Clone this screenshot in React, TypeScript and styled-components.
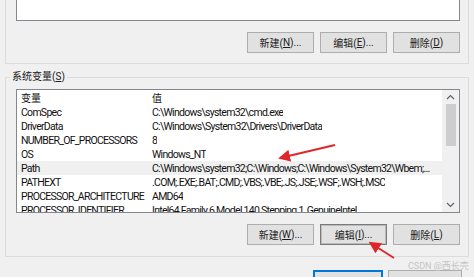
import styled, { createGlobalStyle } from "styled-components";

const GlobalStyle = createGlobalStyle`
  html, body {
    margin: 0;
    padding: 0;
    background: #f0f0f0;
    overflow: hidden;
  }
  body {
    font-family: Roboto, "Noto Sans CJK SC", sans-serif;
    font-size: 10.5px;
    color: #000;
  }
`;

type Row = { name: string; value: string; selected?: boolean };

const rows: Row[] = [
  { name: "ComSpec", value: "C:\\Windows\\system32\\cmd.exe" },
  { name: "DriverData", value: "C:\\Windows\\System32\\Drivers\\DriverData" },
  { name: "NUMBER_OF_PROCESSORS", value: "8" },
  { name: "OS", value: "Windows_NT" },
  {
    name: "Path",
    value: "C:\\Windows\\system32;C:\\Windows;C:\\Windows\\System32\\Wbem;...",
    selected: true,
  },
  { name: "PATHEXT", value: ".COM;.EXE;.BAT;.CMD;.VBS;.VBE;.JS;.JSE;.WSF;.WSH;.MSC" },
  { name: "PROCESSOR_ARCHITECTURE", value: "AMD64" },
  { name: "PROCESSOR_IDENTIFIER", value: "Intel64 Family 6 Model 140 Stepping 1, GenuineIntel" },
];

const App = () => {
  return (
    <Window>
      <GlobalStyle />
      <UserGroup>
        <ListStub />
        <ButtonRow>
          <Button>
            新建(<u>N</u>)...
          </Button>
          <Button>
            编辑(<u>E</u>)...
          </Button>
          <Button>
            删除(<u>D</u>)
          </Button>
        </ButtonRow>
      </UserGroup>

      <Group>
        <Legend>
          系统变量(<u>S</u>)
        </Legend>
        <List>
          <Rows>
            <HeaderRow>
              <NameCell>变量</NameCell>
              <ValueCell>值</ValueCell>
            </HeaderRow>
            {rows.map((r) => (
              <ItemRow key={r.name} $selected={r.selected}>
                <NameCell>{r.name}</NameCell>
                <ValueCell>{r.value}</ValueCell>
              </ItemRow>
            ))}
          </Rows>
          <ScrollBar>
            <ArrowBox>
              <svg width="9" height="6" viewBox="0 0 9 6">
                <path d="M1 5 L4.5 1.5 L8 5" fill="none" stroke="#606060" strokeWidth="1.2" />
              </svg>
            </ArrowBox>
            <Thumb />
            <Track />
            <ArrowBox>
              <svg width="9" height="6" viewBox="0 0 9 6">
                <path d="M1 1 L4.5 4.5 L8 1" fill="none" stroke="#606060" strokeWidth="1.2" />
              </svg>
            </ArrowBox>
          </ScrollBar>
        </List>
        <ButtonRow>
          <Button>
            新建(<u>W</u>)...
          </Button>
          <Button $focused>
            编辑(<u>I</u>)...
          </Button>
          <Button>
            删除(<u>L</u>)
          </Button>
        </ButtonRow>
      </Group>

      <DialogRow>
        <DialogButton $primary>确定</DialogButton>
        <DialogButton $wide>取消</DialogButton>
      </DialogRow>

      <Watermark>CSDN @西长壳</Watermark>

      <Overlay width="474" height="277" viewBox="0 0 474 277">
        <defs>
          <marker id="head" markerWidth="6" markerHeight="6" refX="4" refY="3" orient="auto">
            <path d="M0 0 L6 3 L0 6 Z" fill="#e0262b" />
          </marker>
        </defs>
        <line x1="335" y1="145" x2="282" y2="157.5" stroke="#e0262b" strokeWidth="2" markerEnd="url(#head)" />
        <line x1="394" y1="258" x2="372" y2="244" stroke="#e0262b" strokeWidth="2" markerEnd="url(#head)" />
      </Overlay>
    </Window>
  );
};

export default App;

const Window = styled.div`
  position: relative;
  box-sizing: border-box;
  width: 474px;
  height: 277px;
  overflow: hidden;
  padding: 0 5px;
  display: flex;
  flex-direction: column;
  background: #f0f0f0;
`;

const UserGroup = styled.div`
  border: 1px solid #dcdcdc;
  border-top: none;
  padding: 0 8px 10px 10px;
`;

const ListStub = styled.div`
  height: 20px;
  background: #fff;
  border: 1px solid #828790;
  border-top: none;
`;

const ButtonRow = styled.div`
  display: flex;
  justify-content: flex-end;
  gap: 6px;
  margin-top: 11px;
`;

const Button = styled.div<{ $focused?: boolean }>`
  box-sizing: border-box;
  width: 67px;
  height: 21px;
  display: flex;
  align-items: center;
  justify-content: center;
  background: #e1e1e1;
  border: 1px solid ${(p) => (p.$focused ? "#7a7a7a" : "#adadad")};
  box-shadow: ${(p) => (p.$focused ? "inset 0 0 0 1px #bcbcbc" : "none")};
  font-size: 10px;
  color: #1a1a1a;
  white-space: nowrap;
`;

const Group = styled.fieldset`
  margin: 5px 0 0;
  min-width: 0;
  padding: 0 8px 11px 10px;
  border: 1px solid #dcdcdc;
`;

const Legend = styled.legend`
  margin-left: -6px;
  padding: 0 2px;
  line-height: 16px;
  font-size: 10px;
  color: #1a1a1a;
`;

const List = styled.div`
  margin-top: 4px;
  height: 122px;
  display: flex;
  background: #fff;
  border: 1px solid #828790;
  overflow: hidden;
`;

const Rows = styled.div`
  flex: 1;
  min-width: 0;
  overflow: hidden;
`;

const HeaderRow = styled.div`
  display: flex;
  height: 15px;
  align-items: center;
  padding-left: 4px;
  font-size: 10px;
`;

const ItemRow = styled.div<{ $selected?: boolean }>`
  display: flex;
  height: 14px;
  align-items: center;
  padding-left: 4px;
  font-size: 10.5px;
  letter-spacing: -0.72px;
  background: ${(p) => (p.$selected ? "#f0f0f0" : "transparent")};
`;

const NameCell = styled.div`
  width: 131px;
  flex: none;
  white-space: nowrap;
  overflow: hidden;
  color: #111;
`;

const ValueCell = styled.div`
  white-space: nowrap;
  overflow: hidden;
  color: #111;
`;

const ScrollBar = styled.div`
  width: 17px;
  flex: none;
  display: flex;
  flex-direction: column;
  align-items: center;
  background: #f0f0f0;
`;

const ArrowBox = styled.div`
  height: 14px;
  width: 17px;
  display: flex;
  align-items: center;
  justify-content: center;
`;

const Thumb = styled.div`
  width: 10px;
  height: 42px;
  background: #cdcdcd;
`;

const Track = styled.div`
  flex: 1;
`;

const DialogRow = styled.div`
  display: flex;
  justify-content: flex-end;
  gap: 5px;
  margin-top: 13px;
  padding-right: 7px;
`;

const DialogButton = styled.div<{ $primary?: boolean; $wide?: boolean }>`
  box-sizing: border-box;
  width: ${(p) => (p.$wide ? "74px" : "70px")};
  height: 22px;
  display: flex;
  align-items: center;
  justify-content: center;
  background: #e1e1e1;
  border: ${(p) => (p.$primary ? "2px solid #0078d7" : "1px solid #adadad")};
  font-size: 10px;
  color: #1a1a1a;
`;

const Watermark = styled.div`
  position: absolute;
  left: 408px;
  top: 259px;
  font-size: 9px;
  color: #c4c4c4;
  white-space: nowrap;
`;

const Overlay = styled.svg`
  position: absolute;
  left: 0;
  top: 0;
  pointer-events: none;
`;
